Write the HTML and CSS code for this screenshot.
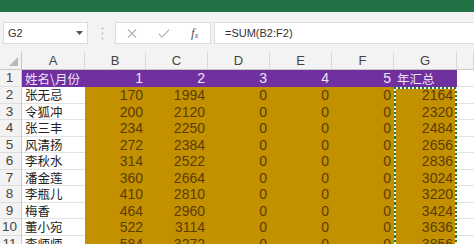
FILE: index.html
```html
<!DOCTYPE html>
<html lang="zh">
<head>
<meta charset="utf-8">
<title>Sheet</title>
<link rel="stylesheet" href="styles.css">
</head>
<body>
<div class="app">
  <div class="titlebar"></div>
  <div class="formula-row">
    <div class="namebox">
      <span class="ref">G2</span>
      <svg class="dd" width="7" height="4" viewBox="0 0 7 4"><path d="M0 0h7L3.5 4z" fill="#555"/></svg>
    </div>
    <svg class="grip" width="3" height="13" viewBox="0 0 3 13"><circle cx="1.5" cy="1.5" r="1" fill="#b8b8b8"/><circle cx="1.5" cy="6.5" r="1" fill="#b8b8b8"/><circle cx="1.5" cy="11.5" r="1" fill="#b8b8b8"/></svg>
    <div class="fbuttons">
      <svg class="ic" width="10" height="9" viewBox="0 0 10 9"><path d="M1 0.5l8 8M9 0.5l-8 8" stroke="#b0b0b0" stroke-width="1.1" fill="none"/></svg>
      <svg class="ic" width="12" height="9" viewBox="0 0 12 9"><path d="M0.8 4.8l3.2 3.3L11.2 0.6" stroke="#b0b0b0" stroke-width="1.1" fill="none"/></svg>
      <span class="fx"><i>f</i><sub>x</sub></span>
    </div>
    <div class="finput">=SUM(B2:F2)</div>
  </div>
  <div class="viewport">
  <div class="sheet">
    <div class="corner"><span class="tri"></span></div>
    <div class="ch">A</div><div class="ch">B</div><div class="ch">C</div><div class="ch">D</div><div class="ch">E</div><div class="ch">F</div><div class="ch">G</div><div class="ch"></div>

    <div class="rh">1</div>
    <div class="p name">姓名\月份</div><div class="p num">1</div><div class="p num">2</div><div class="p num">3</div><div class="p num">4</div><div class="p num">5</div><div class="p name">年汇总</div><div class="e"></div>

    <div class="rh">2</div><div class="name w">张无忌</div><div class="g">170</div><div class="g">1994</div><div class="g">0</div><div class="g">0</div><div class="g">0</div><div class="g sel top">2164</div><div class="e"></div>
    <div class="rh">3</div><div class="name w">令狐冲</div><div class="g">200</div><div class="g">2120</div><div class="g">0</div><div class="g">0</div><div class="g">0</div><div class="g sel">2320</div><div class="e"></div>
    <div class="rh">4</div><div class="name w">张三丰</div><div class="g">234</div><div class="g">2250</div><div class="g">0</div><div class="g">0</div><div class="g">0</div><div class="g sel">2484</div><div class="e"></div>
    <div class="rh">5</div><div class="name w">风清扬</div><div class="g">272</div><div class="g">2384</div><div class="g">0</div><div class="g">0</div><div class="g">0</div><div class="g sel">2656</div><div class="e"></div>
    <div class="rh">6</div><div class="name w">李秋水</div><div class="g">314</div><div class="g">2522</div><div class="g">0</div><div class="g">0</div><div class="g">0</div><div class="g sel">2836</div><div class="e"></div>
    <div class="rh">7</div><div class="name w">潘金莲</div><div class="g">360</div><div class="g">2664</div><div class="g">0</div><div class="g">0</div><div class="g">0</div><div class="g sel">3024</div><div class="e"></div>
    <div class="rh">8</div><div class="name w">李瓶儿</div><div class="g">410</div><div class="g">2810</div><div class="g">0</div><div class="g">0</div><div class="g">0</div><div class="g sel">3220</div><div class="e"></div>
    <div class="rh">9</div><div class="name w">梅香</div><div class="g">464</div><div class="g">2960</div><div class="g">0</div><div class="g">0</div><div class="g">0</div><div class="g sel">3424</div><div class="e"></div>
    <div class="rh">10</div><div class="name w">董小宛</div><div class="g">522</div><div class="g">3114</div><div class="g">0</div><div class="g">0</div><div class="g">0</div><div class="g sel">3636</div><div class="e"></div>
    <div class="rh">11</div><div class="name w">李师师</div><div class="g">584</div><div class="g">3272</div><div class="g">0</div><div class="g">0</div><div class="g">0</div><div class="g sel">3856</div><div class="e"></div>
  </div>
  </div>
</div>
</body>
</html>
```
FILE: styles.css
```css
* { box-sizing: border-box; }
html, body { margin: 0; padding: 0; background: #fff; }
body { width: 474px; height: 244px; overflow: hidden; font-family: "Liberation Sans", Arial, sans-serif; }

.app { display: flex; flex-direction: column; width: 474px; height: 244px; }

.titlebar { height: 12px; background: #217346; flex: none; }

.formula-row {
  height: 40px;
  flex: none;
  background: #f3f3f3;
  display: flex;
  align-items: flex-start;
  padding-top: 10px;
  padding-left: 3px;
}
.namebox {
  width: 85px; height: 22px;
  background: #fff;
  border: 1px solid #dcdcdc;
  display: flex; align-items: center; justify-content: space-between;
  padding: 0 4px 0 4px;
  font-size: 11px; color: #333;
}
.namebox .dd { margin-top: -1px; }
.grip { margin: 5px 0 0 13px; }
.fbuttons {
  margin-left: 11px;
  width: 96px; height: 22px;
  background: #fff;
  border: 1px solid #dcdcdc;
  display: flex; align-items: center;
  padding-left: 11px;
  gap: 21px;
}
.fx { font-family: "Liberation Serif", serif; font-size: 13px; color: #555; line-height: 1; }
.fx sub { font-size: 8px; font-style: italic; vertical-align: -1px; }
.finput {
  margin-left: 3px;
  flex: 1; height: 22px;
  background: #fff;
  border: 1px solid #dcdcdc;
  border-right: none;
  padding-left: 10px;
  font-size: 11px; color: #333;
  line-height: 20px;
}

.viewport { flex: 1; overflow: hidden; }
.sheet {
  display: grid;
  grid-template-columns: 22px 63px 61px 62px 62px 62px 62px 63px 17px;
  grid-template-rows: 18px 17px repeat(10, 16.5px);
  font-family: "Liberation Sans Narrow", "Liberation Sans", sans-serif;
}
.corner { background: #f3f3f3; border-right: 1px solid #c8c8c8; border-bottom: 1px solid #c8c8c8; position: relative; }
.tri {
  position: absolute; right: 3px; bottom: 3px;
  width: 0; height: 0;
  border-left: 9px solid transparent;
  border-bottom: 9px solid #b9b9b9;
}
.ch {
  background: #f3f3f3;
  border-right: 1px solid #d8d8d8;
  border-bottom: 1px solid #c8c8c8;
  text-align: center;
  font-size: 13px; color: #444;
  line-height: 18px;
}
.rh {
  background: #f3f3f3;
  border-right: 1px solid #c8c8c8;
  border-bottom: 1px solid #dedede;
  text-align: center;
  font-size: 13.5px; color: #444;
  line-height: 16px;
  padding-right: 2px;
}
.p {
  background: #7030a0;
  color: #efe2f7;
  font-size: 14px;
  line-height: 17px;
}
.name {
  font-family: "Noto Sans CJK SC", sans-serif;
  font-size: 12.5px;
  padding-left: 3px;
  white-space: nowrap;
  line-height: 16px;
}
.p.name { line-height: 17px; }
.w { color: #222; border-bottom: 1px solid #e2e2e2; }
.num { text-align: right; padding-right: 3px; }
.g {
  background: #c39100;
  color: #5c3c00;
  text-align: right;
  padding-right: 3px;
  font-size: 14px;
  line-height: 16.5px;
}
.g.sel {
  padding-right: 4px;
  background:
    repeating-linear-gradient(to bottom, #1e7a3c 0 2px, #f2f2e6 2px 4px) left top / 2px 100% no-repeat,
    repeating-linear-gradient(to bottom, #1e7a3c 0 2px, #f2f2e6 2px 4px) right top / 2px 100% no-repeat,
    #c39100;
}
.g.sel.top {
  background:
    repeating-linear-gradient(to right, #1e7a3c 0 2px, #f2f2e6 2px 4px) left top / 100% 2px no-repeat,
    repeating-linear-gradient(to bottom, #1e7a3c 0 2px, #f2f2e6 2px 4px) left top / 2px 100% no-repeat,
    repeating-linear-gradient(to bottom, #1e7a3c 0 2px, #f2f2e6 2px 4px) right top / 2px 100% no-repeat,
    #c39100;
}
.e { border-bottom: 1px solid #e2e2e2; }
```
